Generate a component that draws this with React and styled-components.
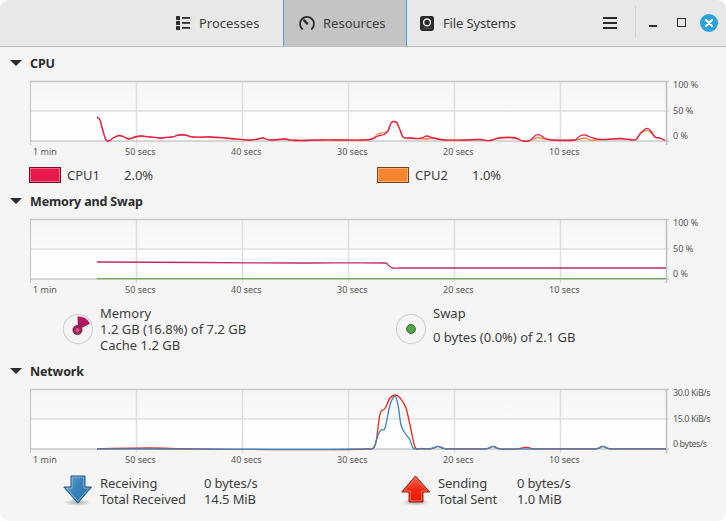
import React from "react";
import styled, { createGlobalStyle } from "styled-components";

const smooth = (pts) => {
  const slope = (a, b) => (b[1] - a[1]) / (b[0] - a[0] || 1);
  let d = `M${pts[0][0]} ${pts[0][1]}`;
  for (let i = 0; i < pts.length - 1; i++) {
    const p0 = pts[i - 1] || pts[i];
    const p1 = pts[i];
    const p2 = pts[i + 1];
    const p3 = pts[i + 2] || p2;
    const dx = (p2[0] - p1[0]) / 3;
    const c1y = p1[1] + slope(p0, p2) * dx;
    const c2y = p2[1] - slope(p1, p3) * dx;
    d += ` C${(p1[0] + dx).toFixed(1)} ${c1y.toFixed(1)} ${(p2[0] - dx).toFixed(1)} ${c2y.toFixed(1)} ${p2[0]} ${p2[1]}`;
  }
  return d;
};

const cpu1 = [[97,117],[100,120],[103,131],[106,140],[110,140.5],[113,138],[119,135.5],[124,137],[129,139],[135,137],[141,136],[150,137],[160,138],[165,137.5],[172,137],[179,135],[185,135],[192,137],[210,137],[230,138.5],[250,140],[258,139],[262,138],[270,140],[285,139],[290,140],[300,140.5],[320,140],[345,140],[363,140],[372,139],[378,136],[384,134.5],[388,131],[391,123],[394,121.5],[397,123],[400,130],[403,137],[410,138],[420,138.5],[427,136],[433,138],[445,140],[465,140],[480,139.5],[490,140.5],[500,138],[515,138],[523,141],[530,140.5],[536,135],[540,135],[546,139],[552,140],[575,140],[580,136],[585,135],[590,137],[600,139.5],[620,138.5],[630,139.5],[636,139.5],[640,134],[646,128.5],[650,130],[655,137],[660,138],[665,140.5]];
const cpu2 = cpu1.map(([x, y]) => {
  if (x > 376 && x < 388) return [x, y - 2];
  if ((x > 530 && x < 546) || (x > 578 && x < 592) || (x > 420 && x < 432)) return [x, y + 3];
  if (x > 640 && x < 652) return [x, y + 2];
  if (x === 500 || x === 515) return [x, y - 0.5];
  return [x, y];
});
const memLine = [[97,262],[200,262.5],[300,263],[385,263],[387,263.8],[390,266.5],[393,268],[400,268],[666,268]];
const swapLine = [[97,278.6],[666,278.6]];
const bump = (x, w, h) => [[x - w, 448.8], [x - w / 2, 447.8], [x, 448.8 - h], [x + w / 2, 447.8], [x + w, 448.8]];
const sent = [[97,448.8],[150,448],[190,448.8],[372,448.8],[376,442],[380,414],[385,408.5],[390,398],[395,395],[400,398],[406,408],[410,425],[415,447],[421,448.5],[426,448.8],...bump(438,8,2.5),[478,448.8],...bump(493,7,2.5),...bump(526,7,1.5),[590,448.8],...bump(603,7,2.5),[666,448.8]];
const received = [[97,448.8],[372,448.8],[375,445],[378,435],[381,430],[385,428],[390,405],[395,396],[398,405],[401,425],[405,433],[410,440],[413,448],[420,448.8],...bump(438,8,2.5),...bump(493,7,2.5),...bump(603,7,2.5),[666,448.8]];

const Graph = ({ top, yLabels, tight, lines }) => (
  <GraphWrap>
    <GraphRow>
      <svg width="640" height="66" style={{ display: "block" }}>
        <defs>
          <linearGradient id={`upper${top}`} x1="0" y1="0" x2="0" y2="1">
            <stop offset="0" stopColor="#f5f5f5" />
            <stop offset="1" stopColor="#fafafa" />
          </linearGradient>
          <linearGradient id={`lower${top}`} x1="0" y1="0" x2="0" y2="1">
            <stop offset="0" stopColor="#fdfdfd" />
            <stop offset="1" stopColor="#ffffff" />
          </linearGradient>
        </defs>
        <rect x="1" y="1" width="636" height="30" fill={`url(#upper${top})`} />
        <rect x="1" y="31" width="636" height="30" fill={`url(#lower${top})`} />
        {[107, 213, 319, 425, 531].map((x) => (
          <line key={x} x1={x + 0.5} y1="1" x2={x + 0.5} y2="65" stroke="#dedede" strokeWidth="1.5" />
        ))}
        <line x1="1" y1="31" x2="640" y2="31" stroke="#dedede" strokeWidth="1.5" />
        <line x1="1" y1="1.5" x2="640" y2="1.5" stroke="#c8c8c8" strokeWidth="1.6" />
        <line x1="1" y1="61" x2="640" y2="61" stroke="#c8c8c8" strokeWidth="1.6" />
        <line x1="1.5" y1="1" x2="1.5" y2="65" stroke="#c8c8c8" strokeWidth="1.2" />
        <line x1="637.5" y1="1" x2="637.5" y2="65" stroke="#c0c0c0" strokeWidth="1.6" />
        <g transform={`translate(-29 ${-top})`} fill="none" strokeLinejoin="round">
          {lines.map((l) => (
            <path key={l.color} d={smooth(l.points)} stroke={l.color} strokeWidth={l.width || 1.3} />
          ))}
        </g>
      </svg>
      <YAxis $tight={tight}>
        {yLabels.map((t) => (
          <span key={t}>{t}</span>
        ))}
      </YAxis>
    </GraphRow>
    <XAxis>
      {["1 min", "50 secs", "40 secs", "30 secs", "20 secs", "10 secs"].map((t) => (
        <span key={t}>{t}</span>
      ))}
    </XAxis>
  </GraphWrap>
);

const Section = ({ title, children }) => (
  <SectionBox>
    <Heading>
      <Triangle />
      {title}
    </Heading>
    {children}
  </SectionBox>
);

const ProcessIcon = () => (
  <svg width="14" height="14" viewBox="0 0 14 14" fill="#2e2e2e">
    <rect x="0" y="0" width="4" height="4" rx="0.6" />
    <rect x="0" y="5" width="4" height="4" rx="0.6" />
    <rect x="0" y="10" width="4" height="4" rx="0.6" />
    <rect x="6" y="1" width="8" height="1.8" />
    <rect x="6" y="6" width="8" height="1.8" />
    <rect x="6" y="11" width="8" height="1.8" />
  </svg>
);

const GaugeIcon = () => (
  <svg width="16" height="16" viewBox="0 0 16 16" fill="none" stroke="#2e2e2e" strokeWidth="1.8" strokeLinecap="round">
    <path d="M3.2 14 A7 7 0 1 1 12.8 14" />
    <path d="M5.2 5.4 L8.2 8.6" strokeWidth="2.4" />
  </svg>
);

const DiskIcon = () => (
  <svg width="14" height="15" viewBox="0 0 14 15">
    <rect x="0" y="0" width="14" height="15" rx="2.4" fill="#2a2a2a" />
    <circle cx="7" cy="6.4" r="3.4" fill="none" stroke="#f0f0f0" strokeWidth="1.5" />
    <rect x="2.5" y="11.6" width="9" height="1.2" fill="#555" />
  </svg>
);

const MemoryIcon = () => (
  <svg width="32" height="32" viewBox="0 0 32 32">
    <circle cx="16" cy="16" r="14.6" fill="#f4f4f4" stroke="#d4d4d4" strokeWidth="1.2" />
    <path d="M16 17 L15.5 3.5 A12 12 0 0 1 28 10.6 Z" fill="#b0175c" />
    <circle cx="15.5" cy="17" r="4.6" fill="#b0175c" stroke="#3c3c3c" strokeWidth="0.8" />
    <circle cx="15.5" cy="17" r="2" fill="#d9578f" />
  </svg>
);

const SwapIcon = () => (
  <svg width="32" height="32" viewBox="0 0 32 32">
    <circle cx="16" cy="16" r="14.6" fill="#f4f4f4" stroke="#d4d4d4" strokeWidth="1.2" />
    <circle cx="16" cy="16" r="4.4" fill="#4eaa3f" stroke="#34503a" strokeWidth="0.9" />
  </svg>
);

const DownArrow = () => (
  <svg width="30" height="32" viewBox="0 0 30 32">
    <defs>
      <linearGradient id="downFill" x1="0" y1="0" x2="1" y2="0.6">
        <stop offset="0" stopColor="#6ea7d3" />
        <stop offset="0.5" stopColor="#3a86bd" />
        <stop offset="1" stopColor="#2a72a8" />
      </linearGradient>
      <radialGradient id="downShadow">
        <stop offset="0" stopColor="#aaa" />
        <stop offset="1" stopColor="#f5f5f5" />
      </radialGradient>
    </defs>
    <ellipse cx="14.5" cy="27.5" rx="14" ry="3.5" fill="url(#downShadow)" />
    <path d="M8 1 H22 V12 H28.5 L14.8 28 L0.8 12 H8 Z" fill="url(#downFill)" stroke="#1f4f78" strokeWidth="1" strokeLinejoin="round" />
    <path d="M9.2 2.2 H20.8 V13.2 H25.8 L14.8 26 L3.4 13.2 H9.2 Z" fill="none" stroke="#8dbde0" strokeWidth="0.8" />
  </svg>
);

const UpArrow = () => (
  <svg width="30" height="32" viewBox="0 0 30 32">
    <defs>
      <linearGradient id="upFill" x1="0" y1="0" x2="0" y2="1">
        <stop offset="0" stopColor="#f4604a" />
        <stop offset="0.55" stopColor="#ee2a10" />
        <stop offset="1" stopColor="#e81c00" />
      </linearGradient>
      <radialGradient id="upShadow">
        <stop offset="0" stopColor="#aaa" />
        <stop offset="1" stopColor="#f5f5f5" />
      </radialGradient>
    </defs>
    <ellipse cx="14.5" cy="27.5" rx="14" ry="3.5" fill="url(#upShadow)" />
    <path d="M14.5 1 L28.5 17 H22 V27 H8 V17 H0.8 Z" fill="url(#upFill)" stroke="#8f1a0c" strokeWidth="1" strokeLinejoin="round" />
    <path d="M14.5 3 L25.8 16 H20.8 V25.8 H9.2 V16 H3.4 Z" fill="none" stroke="#f98a76" strokeWidth="0.7" />
  </svg>
);

export default function App() {
  return (
    <>
      <Global />
      <Window>
        <Header>
          <Tab $pad={24} $width={131}>
            <ProcessIcon />
            Processes
          </Tab>
          <Tab $active $pad={15} $width={124} $gap={8}>
            <GaugeIcon />
            Resources
          </Tab>
          <Tab $pad={13} $last>
            <DiskIcon />
            <TightLabel>File Systems</TightLabel>
          </Tab>
          <Hamburger>
            <i />
            <i />
            <i />
          </Hamburger>
          <Separator />
          <Minimize />
          <Maximize />
          <CloseButton>
            <svg width="18" height="18" viewBox="0 0 18 18">
              <circle cx="9" cy="9" r="9" fill="#29a3df" />
              <path d="M6 6 L12 12 M12 6 L6 12" stroke="#fff" strokeWidth="2.2" strokeLinecap="round" />
            </svg>
          </CloseButton>
        </Header>

        <Section title="CPU">
          <Graph
            top={80}
            yLabels={["100 %", "50 %", "0 %"]}
            lines={[
              { color: "#f68530", points: cpu2 },
              { color: "#ea1c4e", points: cpu1 },
            ]}
          />
          <Legend>
            <LegendItem>
              <Swatch $color="#e8194c" $edge="#7a0d28" />
              <LegendName>CPU1</LegendName>
              <span>2.0%</span>
            </LegendItem>
            <LegendItem>
              <Swatch $color="#f68530" $edge="#7a4216" />
              <LegendName>CPU2</LegendName>
              <span>1.0%</span>
            </LegendItem>
          </Legend>
        </Section>

        <Section title="Memory and Swap">
          <Graph
            top={218}
            yLabels={["100 %", "50 %", "0 %"]}
            lines={[
              { color: "#6aaa50", points: swapLine },
              { color: "#c02a6c", points: memLine },
            ]}
          />
          <MemoryRow>
            <MemoryCell>
              <MemoryIcon />
              <InfoText>
                <div>Memory</div>
                <div>1.2 GB (16.8%) of 7.2 GB</div>
                <div>Cache 1.2 GB</div>
              </InfoText>
            </MemoryCell>
            <MemoryCell>
              <SwapIcon />
              <InfoText $wide>
                <div>Swap</div>
                <div>0 bytes (0.0%) of 2.1 GB</div>
              </InfoText>
            </MemoryCell>
          </MemoryRow>
        </Section>

        <Section title="Network">
          <Graph
            top={388}
            tight
            yLabels={["30.0 KiB/s", "15.0 KiB/s", "0 bytes/s"]}
            lines={[
              { color: "#e8281c", points: sent },
              { color: "#3b85be", points: received },
            ]}
          />
          <NetRow>
            <NetCell>
              <DownArrow />
              <NetGrid $col={104}>
                <span>Receiving</span>
                <span>0 bytes/s</span>
                <span>Total Received</span>
                <span>14.5 MiB</span>
              </NetGrid>
            </NetCell>
            <NetCell>
              <UpArrow />
              <NetGrid $col={79}>
                <span>Sending</span>
                <span>0 bytes/s</span>
                <span>Total Sent</span>
                <span>1.0 MiB</span>
              </NetGrid>
            </NetCell>
          </NetRow>
        </Section>
      </Window>
    </>
  );
}

const Global = createGlobalStyle`
  html, body {
    margin: 0;
    padding: 0;
    background: #ffffff;
  }
  body {
    font-family: "Noto Sans", "Open Sans", sans-serif;
    font-size: 13px;
    color: #3d3d3d;
  }
`;

const Window = styled.div`
  width: 726px;
  height: 521px;
  box-sizing: border-box;
  background: #f5f5f5;
  border-radius: 9px;
  overflow: hidden;
`;

const Header = styled.header`
  height: 47px;
  box-sizing: border-box;
  display: flex;
  align-items: stretch;
  padding-left: 152px;
  background: #e8e8e8;
  border-bottom: 1px solid #bdbdbd;
  margin-bottom: 6px;
`;

const Tab = styled.div`
  box-sizing: border-box;
  width: ${(p) => (p.$width ? `${p.$width}px` : "auto")};
  display: flex;
  align-items: center;
  gap: ${(p) => p.$gap || 9}px;
  font-size: 13px;
  padding-left: ${(p) => p.$pad}px;
  color: #3d3d3d;
  background: ${(p) => (p.$active ? "#c4c4c4" : "transparent")};
  border-left: ${(p) => (p.$active ? "1px solid #5f9fc9" : "none")};
  border-right: ${(p) => (p.$active ? "1px solid #3f9fdc" : "none")};
  margin-right: ${(p) => (p.$last ? "auto" : "0")};
`;

const TightLabel = styled.span`
  letter-spacing: -0.15px;
`;

const Hamburger = styled.div`
  width: 14px;
  display: flex;
  flex-direction: column;
  justify-content: center;
  gap: 3px;
  margin-right: 18px;

  i {
    display: block;
    height: 2px;
    background: #2a2a2a;
  }
`;

const Separator = styled.div`
  width: 1px;
  background: #d2d2d2;
  margin: 6px 0 9px;
`;

const Minimize = styled.div`
  width: 8px;
  height: 1.5px;
  background: #2e2e2e;
  align-self: center;
  margin: 6px 0 0 13px;
`;

const Maximize = styled.div`
  width: 7px;
  height: 7px;
  border: 1.2px solid #2e2e2e;
  align-self: center;
  margin: 0 0 1px 20px;
`;

const CloseButton = styled.div`
  align-self: center;
  display: flex;
  margin: 0 8px 1px 14px;
`;

const SectionBox = styled.section`
  padding-left: 10px;
`;

const Heading = styled.h2`
  height: 20px;
  margin: 0;
  display: flex;
  align-items: center;
  gap: 8px;
  font-size: 12.5px;
  letter-spacing: -0.15px;
  font-weight: 700;
  color: #2c2c2c;
`;

const Triangle = styled.span`
  width: 0;
  height: 0;
  border-left: 6px solid transparent;
  border-right: 6px solid transparent;
  border-top: 6px solid #2c2c2c;
`;

const GraphWrap = styled.div`
  margin: 7px 0 0 19px;
`;

const GraphRow = styled.div`
  display: flex;
`;

const YAxis = styled.div`
  height: 65px;
  margin: -2px 0 0 4px;
  display: flex;
  flex-direction: column;
  justify-content: space-between;
  font-size: 9px;
  line-height: 14px;
  letter-spacing: ${(p) => (p.$tight ? "-0.45px" : "0")};
  color: #555;
`;

const XAxis = styled.div`
  display: grid;
  grid-template-columns: 92px repeat(5, 106px);
  margin: -1px 0 0 4px;
  font-size: 9px;
  line-height: 14px;
  color: #555;
`;

const Legend = styled.div`
  display: grid;
  grid-template-columns: 348px 1fr;
  margin: 7px 0 7px 19px;
  height: 18px;
`;

const LegendItem = styled.div`
  display: flex;
  align-items: center;
`;

const Swatch = styled.span`
  width: 30px;
  height: 14px;
  background: ${(p) => p.$color};
  border: 1px solid ${(p) => p.$edge};
  box-shadow: inset 0 0 0 1px rgba(255, 255, 255, 0.35);
  margin-right: 6px;
`;

const LegendName = styled.span`
  width: 57px;
`;

const MemoryRow = styled.div`
  display: grid;
  grid-template-columns: 333px 1fr;
  margin: 8px 0 8px 52px;
  height: 48px;
`;

const MemoryCell = styled.div`
  display: flex;
  align-items: center;
  gap: 6px;
`;

const InfoText = styled.div`
  line-height: 16px;
  display: flex;
  flex-direction: column;
  gap: ${(p) => (p.$wide ? "8px" : "0")};
  align-self: ${(p) => (p.$wide ? "flex-start" : "center")};
`;

const NetRow = styled.div`
  display: grid;
  grid-template-columns: 338px 1fr;
  margin: 8px 0 0 53px;
`;

const NetCell = styled.div`
  display: flex;
  align-items: flex-start;
  gap: 7px;
`;

const NetGrid = styled.div`
  display: grid;
  grid-template-columns: ${(p) => p.$col}px auto;
  line-height: 16px;
  letter-spacing: -0.1px;
`;
